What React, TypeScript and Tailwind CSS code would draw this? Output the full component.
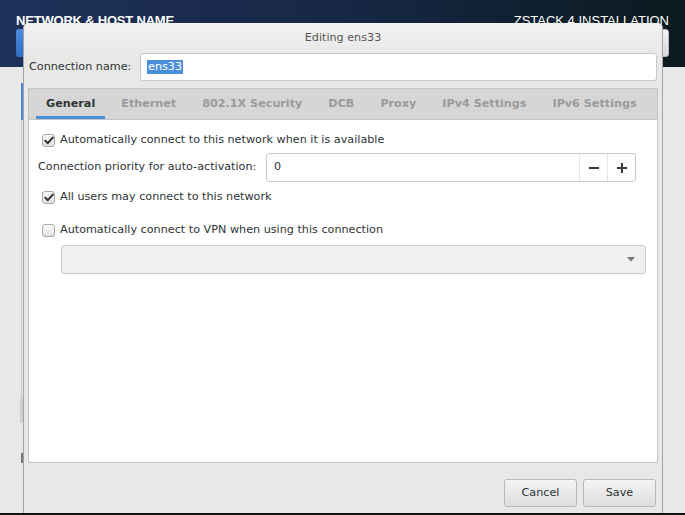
import React from "react";

const font = { fontFamily: '"DejaVu Sans", "Liberation Sans", sans-serif' };

function Check({ checked }: { checked: boolean }) {
  return (
    <span className="w-[13px] h-[13px] rounded-[3px] border border-[#a8a8a8] bg-gradient-to-b from-[#fafafa] to-[#e2e2e2] flex items-center justify-center shrink-0">
      {checked && (
        <svg width="10" height="9" viewBox="0 0 10 9">
          <path d="M1.2 4.6 L3.8 7.2 L8.8 1.6" fill="none" stroke="#2e3436" strokeWidth="2" strokeLinecap="round" strokeLinejoin="round" />
        </svg>
      )}
    </span>
  );
}

const tabs = ["General", "Ethernet", "802.1X Security", "DCB", "Proxy", "IPv4 Settings", "IPv6 Settings"];

export default function App() {
  return (
    <div className="w-[685px] h-[515px] relative overflow-hidden bg-[#e8e8e7] text-[#2e3436]" style={font}>
      {/* installer header */}
      <div className="h-[67px] bg-gradient-to-r from-[#1f3159] via-[#162746] to-[#0b1a1f] relative">
        <div className="absolute left-[16px] top-[11px] text-white text-[13px] font-bold tracking-[-0.2px]" style={{ fontFamily: '"Liberation Sans", sans-serif' }}>
          NETWORK &amp; HOST NAME
        </div>
        <div className="absolute right-[16px] top-[11px] text-white text-[13px]" style={{ fontFamily: '"Liberation Sans", sans-serif' }}>
          ZSTACK 4 INSTALLATION
        </div>
        <div className="absolute left-[16px] top-[29px] w-[20px] h-[28px] rounded-[3px] bg-gradient-to-b from-[#4a8ee0] to-[#2f6fc4]" />
        <div className="absolute left-[655px] top-[29px] w-[14px] h-[28px] rounded-[3px] bg-gradient-to-b from-[#f2f2f2] to-[#d8d8d8] border border-[#bbb]" />
      </div>
      {/* background list scroll marks */}
      <div className="absolute left-[21px] top-[83px] w-[3px] h-[37px] bg-[#4a86d6]" />
      <div className="absolute left-[21px] top-[120px] w-[1px] h-[303px] bg-[#c6c6c6]" />
      <div className="absolute left-[20px] top-[397px] w-[3px] h-[26px] bg-[#cfcfcf]" />
      <div className="absolute left-[21px] top-[453px] w-[2px] h-[10px] bg-[#777]" />
      <div className="absolute left-0 bottom-0 w-full h-[2px] bg-[#111]" />

      {/* dialog window */}
      <div className="absolute left-[23px] top-[23px] w-[640px] h-[490px] bg-[#e8e8e7] border-x border-[#a4a4a4] rounded-t-[5px] flex flex-col">
        <div className="h-[30px] shrink-0 rounded-t-[5px] bg-gradient-to-b from-[#f3f3f3] to-[#e8e8e7] flex items-center justify-center text-[11.2px] text-[#555]">
          Editing ens33
        </div>
        <div className="h-[28px] shrink-0 flex items-center pl-[5px] pr-[5px]">
          <span className="text-[11.2px] w-[111px] text-[#2e3436]">Connection name:</span>
          <div className="flex-1 h-[28px] bg-white border border-[#c8c8c8] rounded-[3px] flex items-center pl-[6px]">
            <span className="bg-[#4a90d9] text-white text-[11.2px] leading-[14px] px-[1px]">ens33</span>
          </div>
        </div>
        <div className="mt-[7px] mx-[4px] h-[375px] shrink-0 flex flex-col border border-[#c4c4c4]">
          <div className="h-[31px] shrink-0 bg-[#d6d6d6] flex items-stretch pl-[7px] gap-[6px] border-b border-[#c4c4c4]">
            {tabs.map((t, i) => (
              <div
                key={t}
                className={
                  "px-[10px] pt-[3px] flex items-center text-[11.2px] font-bold border-b-[3px] " +
                  (i === 0 ? "text-[#2e3436] border-[#4a90d9]" : "text-[#9a9a9a] border-transparent")
                }
              >
                {t}
              </div>
            ))}
          </div>
          <div className="flex-1 bg-white pl-[13px] pt-[13px] text-[11.2px]">
            <div className="flex items-center gap-[5px] h-[14px]">
              <Check checked />
              <span>Automatically connect to this network when it is available</span>
            </div>
            <div className="flex items-center mt-[6px]">
              <span className="w-[228px] -ml-[4px]">Connection priority for auto-activation:</span>
              <div className="w-[370px] h-[29px] border border-[#c8c8c8] rounded-[3px] flex items-stretch bg-white">
                <div className="flex-1 flex items-center pl-[7px]">0</div>
                <div className="w-[28px] border-l border-[#e6e6e6] flex items-center justify-center">
                  <svg width="10" height="10" viewBox="0 0 10 10"><rect x="0" y="4" width="10" height="2" fill="#3a3a3a" /></svg>
                </div>
                <div className="w-[28px] border-l border-[#e6e6e6] flex items-center justify-center">
                  <svg width="10" height="10" viewBox="0 0 10 10"><rect x="0" y="4" width="10" height="2" fill="#3a3a3a" /><rect x="4" y="0" width="2" height="10" fill="#3a3a3a" /></svg>
                </div>
              </div>
            </div>
            <div className="flex items-center gap-[5px] h-[14px] mt-[8px]">
              <Check checked />
              <span>All users may connect to this network</span>
            </div>
            <div className="flex items-center gap-[5px] h-[14px] mt-[19px]">
              <Check checked={false} />
              <span>Automatically connect to VPN when using this connection</span>
            </div>
            <div className="ml-[19px] mt-[8px] w-[585px] h-[29px] border border-[#c8c8c8] rounded-[3px] bg-[#f0f0f0] flex items-center justify-end pr-[10px]">
              <svg width="8" height="5" viewBox="0 0 8 5"><path d="M0 0 L8 0 L4 4.5 Z" fill="#777" /></svg>
            </div>
          </div>
        </div>
        <div className="flex-1 flex items-end justify-end gap-[6px] pr-[6px] pb-[6px]">
          {["Cancel", "Save"].map((b) => (
            <div key={b} className="w-[73px] h-[28px] rounded-[3px] border border-[#b8b8b8] bg-gradient-to-b from-[#f4f4f4] to-[#dedede] flex items-center justify-center text-[11.2px] text-[#2e3436]">
              {b}
            </div>
          ))}
        </div>
      </div>
    </div>
  );
}
